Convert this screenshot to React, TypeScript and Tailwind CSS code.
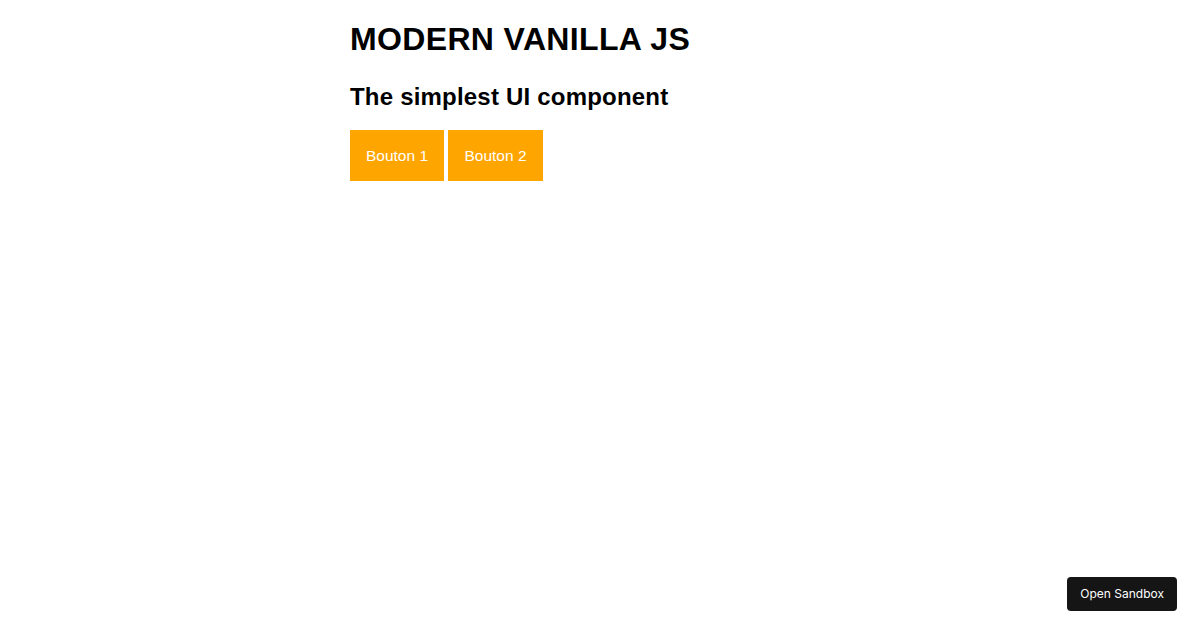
export default function App() {
  return (
    <div className="min-h-[630px] bg-white font-['Liberation_Sans',Arial,sans-serif] text-black">
      <main className="mx-auto w-[500px] pt-[21px]">
        <h1 className="text-[32px] font-bold leading-[37px] tracking-[0.35px]">MODERN VANILLA JS</h1>
        <h2 className="mt-[25px] text-[24px] font-bold leading-[28px] tracking-[0.2px]">The simplest UI component</h2>
        <div className="mt-[19px] flex gap-1">
          <button className="h-[51px] w-[94px] bg-[#ffa500] text-[15.5px] text-white">Bouton 1</button>
          <button className="h-[51px] w-[95px] bg-[#ffa500] text-[15.5px] text-white">Bouton 2</button>
        </div>
      </main>
      <a className="fixed bottom-[19px] right-[23px] flex h-[34px] items-center rounded-[4px] bg-[#151515] px-[13px] font-['Inter',sans-serif] text-[12px] text-white">
        Open Sandbox
      </a>
    </div>
  );
}
